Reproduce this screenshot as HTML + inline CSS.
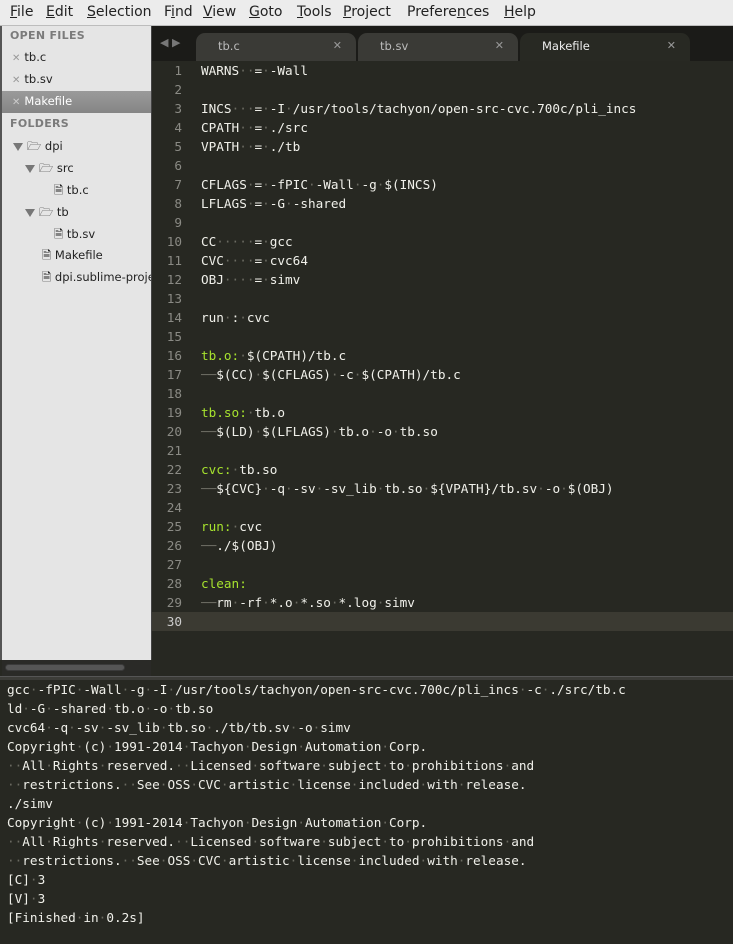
<!DOCTYPE html>
<html><head><meta charset="utf-8"><style>
*{margin:0;padding:0;box-sizing:border-box}
body{width:733px;height:944px;overflow:hidden;background:#272822;font-family:"DejaVu Sans","Liberation Sans",sans-serif;position:relative}
#menu{position:absolute;left:0;top:0;width:733px;height:26px;background:#ececec;border-bottom:1px solid #bdbdbd;font-size:14px;color:#222}
#menu span{position:absolute;top:4px}
#menu u{text-decoration:underline}
#side{position:absolute;left:0;top:26px;width:152px;height:634px;background:#e5e5e5;border-left:2px solid #555;border-right:1px solid #444;font-size:11.5px;color:#222;overflow:hidden}
.it{position:absolute;white-space:nowrap}
.hd{font-weight:bold;color:#7b7b7b;font-size:11px;letter-spacing:.3px}
.x{color:#999;font-size:10px;margin-right:4px}
#sel{position:absolute;left:0;top:65px;width:152px;height:22px;background:linear-gradient(#9a9a9a,#858585)}
.tri{display:inline-block;width:0;height:0;border-left:5px solid transparent;border-right:5px solid transparent;border-top:8px solid #777;margin-right:4px;vertical-align:-1px}
#sbot{position:absolute;left:2px;top:660px;width:149px;height:17px;background:#2a2a27}
#sbot div{position:absolute;left:3px;top:4px;width:120px;height:7px;border-radius:4px;background:#555;border:1px solid #3a3a3a}
#tabs{position:absolute;left:152px;top:26px;width:581px;height:35px;background:#1b1b18}
.tab{position:absolute;top:7px;height:28px;background:#3a3a36;border-radius:9px 9px 0 0;color:#bbb;font-size:11.5px;padding:6px 0 0 22px}
.tab b{position:absolute;right:14px;top:6px;color:#999;font-weight:normal;font-size:11px}
#code,#out{position:absolute;font-family:"DejaVu Sans Mono","Liberation Mono",monospace;font-size:12.7px;color:#f0f0ea}
#code{left:152px;top:61px;width:581px;height:615px;overflow:hidden}
.l{height:19px;line-height:19px;position:relative;white-space:pre}
.n{display:inline-block;width:30px;text-align:right;color:#8a8a84;margin-right:19px}
.d{color:#6b6b62}
.g{color:#a6e22e}
.cur{background:#3b3a32}
#div{position:absolute;left:0;top:676px;width:733px;height:4px;background:#3c3c38;border-top:1px solid #555}
#out{left:7px;top:680px;line-height:19px;white-space:pre}
</style></head><body>
<div id="menu">
<span style="left:10px"><u>F</u>ile</span><span style="left:46px"><u>E</u>dit</span><span style="left:87px"><u>S</u>election</span><span style="left:164px">F<u>i</u>nd</span><span style="left:203px"><u>V</u>iew</span><span style="left:249px"><u>G</u>oto</span><span style="left:297px"><u>T</u>ools</span><span style="left:343px"><u>P</u>roject</span><span style="left:407px">Prefere<u>n</u>ces</span><span style="left:504px"><u>H</u>elp</span>
</div>
<div id="side">
<div id="sel"></div>
<div class="it hd" style="left:8px;top:3px">OPEN FILES</div>
<div class="it" style="left:10px;top:24px"><span class="x">✕</span>tb.c</div>
<div class="it" style="left:10px;top:46px"><span class="x">✕</span>tb.sv</div>
<div class="it" style="left:10px;top:68px;color:#fff"><span class="x" style="color:#ccc">✕</span>Makefile</div>
<div class="it hd" style="left:8px;top:91px">FOLDERS</div>
<div class="it" style="left:11px;top:113px"><span class="tri"></span>🗁 dpi</div>
<div class="it" style="left:23px;top:135px"><span class="tri"></span>🗁 src</div>
<div class="it" style="left:52px;top:157px">🗎 tb.c</div>
<div class="it" style="left:23px;top:179px"><span class="tri"></span>🗁 tb</div>
<div class="it" style="left:52px;top:201px">🗎 tb.sv</div>
<div class="it" style="left:40px;top:222px">🗎 Makefile</div>
<div class="it" style="left:40px;top:244px">🗎 dpi.sublime-project</div>
</div>
<div id="sbot"><div></div></div>
<div id="tabs">
<div style="position:absolute;left:8px;top:10px;color:#777;font-size:11px">◀ ▶</div>
<div class="tab" style="left:44px;width:160px">tb.c<b>✕</b></div>
<div class="tab" style="left:206px;width:160px">tb.sv<b>✕</b></div>
<div class="tab" style="left:368px;width:170px;background:#282923;color:#eee">Makefile<b>✕</b></div>
</div>
<div id="code"><div class="l"><span class="n">1</span>WARNS<span class="d">··</span>=<span class="d">·</span>-Wall</div><div class="l"><span class="n">2</span></div><div class="l"><span class="n">3</span>INCS<span class="d">···</span>=<span class="d">·</span>-I<span class="d">·</span>/usr/tools/tachyon/open-src-cvc.700c/pli_incs</div><div class="l"><span class="n">4</span>CPATH<span class="d">··</span>=<span class="d">·</span>./src</div><div class="l"><span class="n">5</span>VPATH<span class="d">··</span>=<span class="d">·</span>./tb</div><div class="l"><span class="n">6</span></div><div class="l"><span class="n">7</span>CFLAGS<span class="d">·</span>=<span class="d">·</span>-fPIC<span class="d">·</span>-Wall<span class="d">·</span>-g<span class="d">·</span>$(INCS)</div><div class="l"><span class="n">8</span>LFLAGS<span class="d">·</span>=<span class="d">·</span>-G<span class="d">·</span>-shared</div><div class="l"><span class="n">9</span></div><div class="l"><span class="n">10</span>CC<span class="d">·····</span>=<span class="d">·</span>gcc</div><div class="l"><span class="n">11</span>CVC<span class="d">····</span>=<span class="d">·</span>cvc64</div><div class="l"><span class="n">12</span>OBJ<span class="d">····</span>=<span class="d">·</span>simv</div><div class="l"><span class="n">13</span></div><div class="l"><span class="n">14</span>run<span class="d">·</span>:<span class="d">·</span>cvc</div><div class="l"><span class="n">15</span></div><div class="l"><span class="n">16</span><span class="g">tb.o:</span><span class="d">·</span>$(CPATH)/tb.c</div><div class="l"><span class="n">17</span><span class="d">──</span>$(CC)<span class="d">·</span>$(CFLAGS)<span class="d">·</span>-c<span class="d">·</span>$(CPATH)/tb.c</div><div class="l"><span class="n">18</span></div><div class="l"><span class="n">19</span><span class="g">tb.so:</span><span class="d">·</span>tb.o</div><div class="l"><span class="n">20</span><span class="d">──</span>$(LD)<span class="d">·</span>$(LFLAGS)<span class="d">·</span>tb.o<span class="d">·</span>-o<span class="d">·</span>tb.so</div><div class="l"><span class="n">21</span></div><div class="l"><span class="n">22</span><span class="g">cvc:</span><span class="d">·</span>tb.so</div><div class="l"><span class="n">23</span><span class="d">──</span>${CVC}<span class="d">·</span>-q<span class="d">·</span>-sv<span class="d">·</span>-sv_lib<span class="d">·</span>tb.so<span class="d">·</span>${VPATH}/tb.sv<span class="d">·</span>-o<span class="d">·</span>$(OBJ)</div><div class="l"><span class="n">24</span></div><div class="l"><span class="n">25</span><span class="g">run:</span><span class="d">·</span>cvc</div><div class="l"><span class="n">26</span><span class="d">──</span>./$(OBJ)</div><div class="l"><span class="n">27</span></div><div class="l"><span class="n">28</span><span class="g">clean:</span></div><div class="l"><span class="n">29</span><span class="d">──</span>rm<span class="d">·</span>-rf<span class="d">·</span>*.o<span class="d">·</span>*.so<span class="d">·</span>*.log<span class="d">·</span>simv</div><div class="l cur"><span class="n" style="color:#ccc">30</span></div></div>
<div id="div"></div>
<div id="out">gcc<span class="d">·</span>-fPIC<span class="d">·</span>-Wall<span class="d">·</span>-g<span class="d">·</span>-I<span class="d">·</span>/usr/tools/tachyon/open-src-cvc.700c/pli_incs<span class="d">·</span>-c<span class="d">·</span>./src/tb.c
ld<span class="d">·</span>-G<span class="d">·</span>-shared<span class="d">·</span>tb.o<span class="d">·</span>-o<span class="d">·</span>tb.so
cvc64<span class="d">·</span>-q<span class="d">·</span>-sv<span class="d">·</span>-sv_lib<span class="d">·</span>tb.so<span class="d">·</span>./tb/tb.sv<span class="d">·</span>-o<span class="d">·</span>simv
Copyright<span class="d">·</span>(c)<span class="d">·</span>1991-2014<span class="d">·</span>Tachyon<span class="d">·</span>Design<span class="d">·</span>Automation<span class="d">·</span>Corp.
<span class="d">··</span>All<span class="d">·</span>Rights<span class="d">·</span>reserved.<span class="d">··</span>Licensed<span class="d">·</span>software<span class="d">·</span>subject<span class="d">·</span>to<span class="d">·</span>prohibitions<span class="d">·</span>and
<span class="d">··</span>restrictions.<span class="d">··</span>See<span class="d">·</span>OSS<span class="d">·</span>CVC<span class="d">·</span>artistic<span class="d">·</span>license<span class="d">·</span>included<span class="d">·</span>with<span class="d">·</span>release.
./simv
Copyright<span class="d">·</span>(c)<span class="d">·</span>1991-2014<span class="d">·</span>Tachyon<span class="d">·</span>Design<span class="d">·</span>Automation<span class="d">·</span>Corp.
<span class="d">··</span>All<span class="d">·</span>Rights<span class="d">·</span>reserved.<span class="d">··</span>Licensed<span class="d">·</span>software<span class="d">·</span>subject<span class="d">·</span>to<span class="d">·</span>prohibitions<span class="d">·</span>and
<span class="d">··</span>restrictions.<span class="d">··</span>See<span class="d">·</span>OSS<span class="d">·</span>CVC<span class="d">·</span>artistic<span class="d">·</span>license<span class="d">·</span>included<span class="d">·</span>with<span class="d">·</span>release.
[C]<span class="d">·</span>3
[V]<span class="d">·</span>3
[Finished<span class="d">·</span>in<span class="d">·</span>0.2s]</div>
</body></html>
